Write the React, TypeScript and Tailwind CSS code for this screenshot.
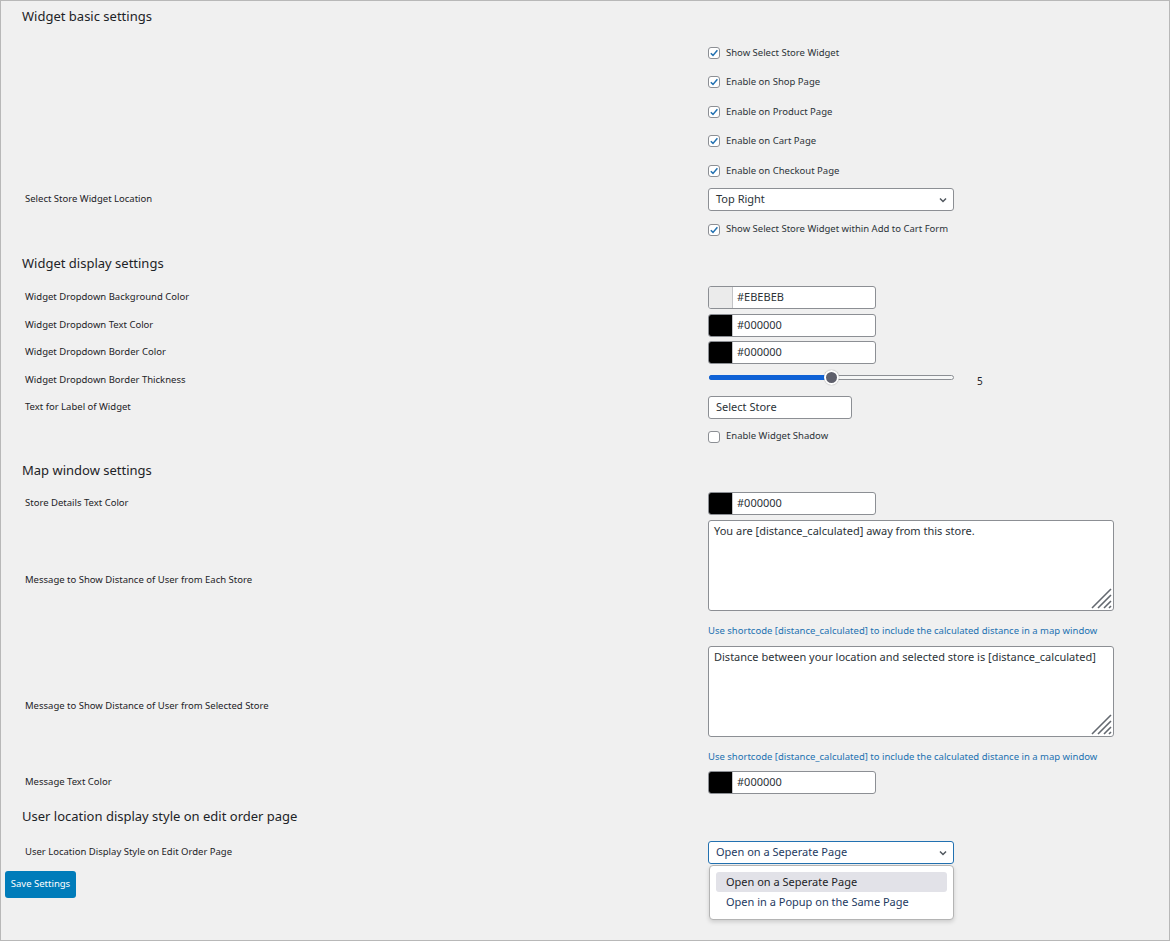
import React from "react";

const font = { fontFamily: '"Noto Sans", "Open Sans", sans-serif' };

function Check({ checked = true }: { checked?: boolean }) {
  return (
    <span className="flex h-[12px] w-[12px] items-center justify-center rounded-[3px] border border-[#8c8f94] bg-white">
      {checked && (
        <svg width="10" height="10" viewBox="0 0 10 10">
          <path d="M1.8 5.2 L4 7.4 L8.4 2.2" fill="none" stroke="#2271b1" strokeWidth="1.5" />
        </svg>
      )}
    </span>
  );
}

function CheckRow({ text, checked = true, h }: { text: string; checked?: boolean; h: string }) {
  return (
    <div className={`flex items-center ${h}`}>
      <div className="w-[686px]" />
      <div className="flex items-center gap-[6px] text-[9.5px] text-[#2c3338]">
        <Check checked={checked} />
        <span>{text}</span>
      </div>
    </div>
  );
}

function Heading({ text, h }: { text: string; h: string }) {
  return (
    <div className={`flex items-center ${h} text-[13px] font-normal text-[#1d2327]`}>{text}</div>
  );
}

function Row({
  label,
  h,
  top = false,
  children,
}: {
  label: string;
  h: string;
  top?: boolean;
  children: React.ReactNode;
}) {
  return (
    <div className={`flex items-center ${h}`}>
      <div className="w-[686px] pl-[3px] text-[9.5px] text-[#1d2327]">{label}</div>
      <div className={`flex items-center ${top ? "self-start" : ""}`}>{children}</div>
    </div>
  );
}

function ColorInput({ color, value }: { color: string; value: string }) {
  return (
    <div className="flex h-[23px] w-[168px] overflow-hidden rounded-[3px] border border-[#8c8f94] bg-white">
      <div className="w-[24px] border-r border-[#c3c4c7]" style={{ background: color }} />
      <div className="flex items-center pl-[4px] text-[11px] text-[#2c3338]">{value}</div>
    </div>
  );
}

function Chevron() {
  return (
    <svg width="10" height="10" viewBox="0 0 10 10">
      <path d="M2 3.5 L5 6.5 L8 3.5" fill="none" stroke="#50575e" strokeWidth="1.5" />
    </svg>
  );
}

function Select({ value, focused = false }: { value: string; focused?: boolean }) {
  return (
    <div
      className={`flex h-[23px] w-[246px] items-center justify-between rounded-[3px] border bg-white pl-[7px] pr-[5px] text-[11px] ${
        focused ? "border-[#2271b1] text-[#1e3a5f]" : "border-[#8c8f94] text-[#2c3338]"
      }`}
    >
      <span>{value}</span>
      <Chevron />
    </div>
  );
}

function TextArea({ text }: { text: string }) {
  return (
    <div className="relative h-[91px] w-[406px] rounded-[3px] border border-[#8c8f94] bg-white px-[5px] py-[2px] text-[11px] text-[#2c3338]">
      {text}
      <svg className="absolute bottom-[1px] right-[1px]" width="22" height="22" viewBox="0 0 22 22">
        <path d="M21 2 L2 21 M21 8 L8 21 M21 14 L14 21 M21 19 L19 21" stroke="#646970" strokeWidth="1.6" />
      </svg>
    </div>
  );
}

function Hint() {
  return (
    <div className="mt-[13px] text-[9.5px] text-[#2271b1]">
      Use shortcode [distance_calculated] to include the calculated distance in a map window
    </div>
  );
}

export default function App() {
  return (
    <div
      className="h-[941px] w-[1170px] border border-[#b8b8b8] bg-[#f0f0f0] pl-[21px] pt-[3px]"
      style={font}
    >
      <Heading text="Widget basic settings" h="h-[26px]" />
      <div className="h-[8px]" />
      <CheckRow text="Show Select Store Widget" h="h-[29.5px]" />
      <CheckRow text="Enable on Shop Page" h="h-[29.5px]" />
      <CheckRow text="Enable on Product Page" h="h-[29.5px]" />
      <CheckRow text="Enable on Cart Page" h="h-[29.5px]" />
      <CheckRow text="Enable on Checkout Page" h="h-[29.5px]" />
      <Row label="Select Store Widget Location" h="h-[28px]">
        <Select value="Top Right" />
      </Row>
      <CheckRow text="Show Select Store Widget within Add to Cart Form" h="h-[32px]" />
      <Heading text="Widget display settings" h="h-[37px]" />
      <Row label="Widget Dropdown Background Color" h="h-[29px]">
        <ColorInput color="#EBEBEB" value="#EBEBEB" />
      </Row>
      <Row label="Widget Dropdown Text Color" h="h-[27px]">
        <ColorInput color="#000000" value="#000000" />
      </Row>
      <Row label="Widget Dropdown Border Color" h="h-[28px]">
        <ColorInput color="#000000" value="#000000" />
      </Row>
      <Row label="Widget Dropdown Border Thickness" h="h-[27px]">
        <div className="flex items-center">
          <div className="relative ml-[1px] h-[5px] w-[245px] -translate-y-[3px] rounded-full border border-[#8c8f94] bg-[#f6f7f7]">
            <div className="absolute -left-[1px] -top-[1px] h-[5px] w-[123px] rounded-full bg-[#0f62d6]" />
            <div className="absolute -top-[6px] left-[114px] h-[15px] w-[15px] rounded-full border-2 border-white bg-[#5f606c] shadow-[0_0_1px_rgba(0,0,0,0.5)]" />
          </div>
          <span className="ml-[23px] mt-[2px] text-[10px] text-[#1d2327]">5</span>
        </div>
      </Row>
      <Row label="Text for Label of Widget" h="h-[27px]">
        <div className="flex h-[23px] w-[144px] items-center rounded-[3px] border border-[#8c8f94] bg-white pl-[7px] text-[11px] text-[#2c3338]">
          Select Store
        </div>
      </Row>
      <CheckRow text="Enable Widget Shadow" checked={false} h="h-[32px]" />
      <Heading text="Map window settings" h="h-[37px]" />
      <Row label="Store Details Text Color" h="h-[28px]">
        <ColorInput color="#000000" value="#000000" />
      </Row>
      <Row label="Message to Show Distance of User from Each Store" h="h-[125px]" top>
        <div className="flex flex-col pt-[2px]">
          <TextArea text="You are [distance_calculated] away from this store." />
          <Hint />
        </div>
      </Row>
      <Row label="Message to Show Distance of User from Selected Store" h="h-[128px]" top>
        <div className="flex flex-col pt-[3px]">
          <TextArea text="Distance between your location and selected store is [distance_calculated]" />
          <Hint />
        </div>
      </Row>
      <Row label="Message Text Color" h="h-[24px]">
        <ColorInput color="#000000" value="#000000" />
      </Row>
      <Heading text="User location display style on edit order page" h="h-[44px]" />
      <Row label="User Location Display Style on Edit Order Page" h="h-[28px]">
        <div className="relative">
          <Select value="Open on a Seperate Page" focused />
          <div className="absolute left-[1px] top-[24px] z-10 w-[245px] rounded-[4px] border border-[#b4b4b4] bg-white px-[6px] py-[6px] text-[11px] text-[#1e3a5f] shadow-[0_2px_4px_rgba(0,0,0,0.15)]">
            <div className="flex h-[20px] items-center rounded-[3px] bg-[#e2e2e8] pl-[10px] text-[#1d2327]">
              Open on a Seperate Page
            </div>
            <div className="flex h-[21px] items-center pl-[10px]">Open in a Popup on the Same Page</div>
          </div>
        </div>
      </Row>
      <div className="-ml-[17px] mt-[4px] flex h-[27px] w-[71px] items-center justify-center rounded-[3px] bg-[#007cba] text-[9.5px] text-white">
        Save Settings
      </div>
    </div>
  );
}
